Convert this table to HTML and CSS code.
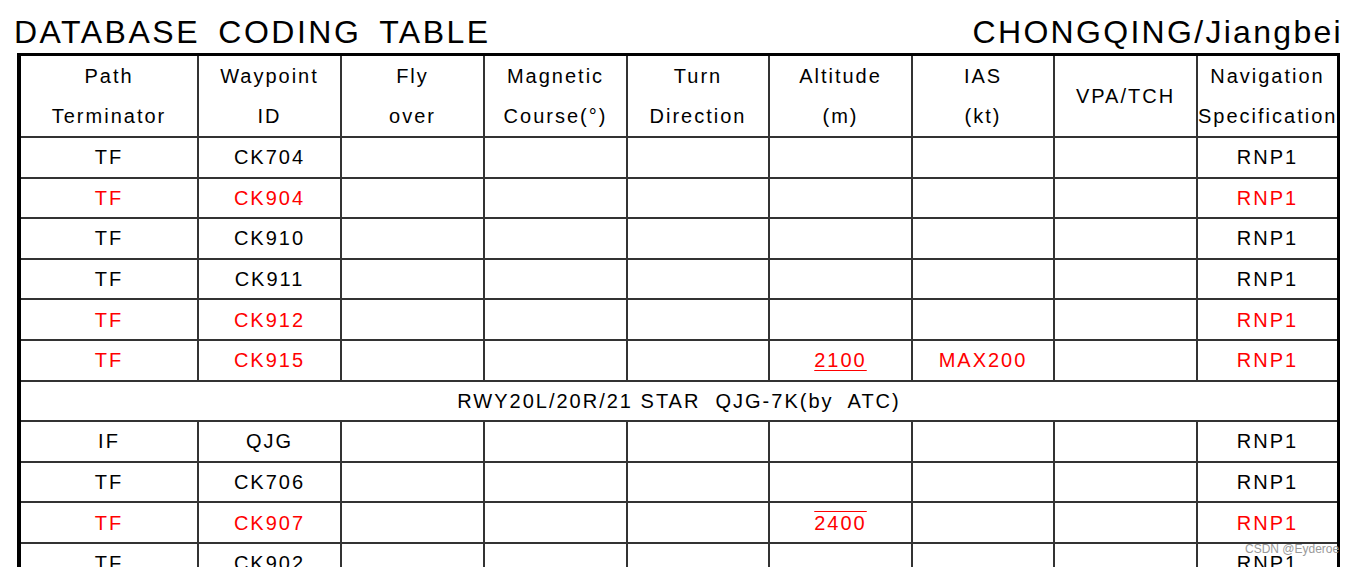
FILE: index.html
```html
<!DOCTYPE html>
<html>
<head>
<meta charset="utf-8">
<link rel="stylesheet" href="styles.css">
</head>
<body>
<div class="page">
  <div class="titlebar">
    <div class="title-left">DATABASE CODING TABLE</div>
    <div class="title-right">CHONGQING/Jiangbei</div>
  </div>
  <div class="frame">
    <table class="coding">
      <colgroup>
        <col class="c-first">
        <col class="c-mid"><col class="c-mid"><col class="c-mid"><col class="c-mid2">
        <col class="c-mid"><col class="c-mid2"><col class="c-mid"><col class="c-last">
      </colgroup>
      <thead>
        <tr class="head">
          <th>Path<br>Terminator</th>
          <th>Waypoint<br>ID</th>
          <th>Fly<br>over</th>
          <th>Magnetic<br>Course(°)</th>
          <th>Turn<br>Direction</th>
          <th>Altitude<br>(m)</th>
          <th>IAS<br>(kt)</th>
          <th>VPA/TCH</th>
          <th class="spec">Navigation<br>Specification</th>
        </tr>
      </thead>
      <tbody>
        <tr><td>TF</td><td>CK704</td><td></td><td></td><td></td><td></td><td></td><td></td><td>RNP1</td></tr>
        <tr class="red"><td>TF</td><td>CK904</td><td></td><td></td><td></td><td></td><td></td><td></td><td>RNP1</td></tr>
        <tr><td>TF</td><td>CK910</td><td></td><td></td><td></td><td></td><td></td><td></td><td>RNP1</td></tr>
        <tr><td>TF</td><td>CK911</td><td></td><td></td><td></td><td></td><td></td><td></td><td>RNP1</td></tr>
        <tr class="red"><td>TF</td><td>CK912</td><td></td><td></td><td></td><td></td><td></td><td></td><td>RNP1</td></tr>
        <tr class="red"><td>TF</td><td>CK915</td><td></td><td></td><td></td><td><span class="under">2100</span></td><td>MAX200</td><td></td><td>RNP1</td></tr>
        <tr class="section"><td colspan="9">RWY20L/20R/21 STAR  QJG-7K(by  ATC)</td></tr>
        <tr><td>IF</td><td>QJG</td><td></td><td></td><td></td><td></td><td></td><td></td><td>RNP1</td></tr>
        <tr><td>TF</td><td>CK706</td><td></td><td></td><td></td><td></td><td></td><td></td><td>RNP1</td></tr>
        <tr class="red"><td>TF</td><td>CK907</td><td></td><td></td><td></td><td><span class="over">2400</span></td><td></td><td></td><td>RNP1</td></tr>
        <tr><td>TF</td><td>CK902</td><td></td><td></td><td></td><td></td><td></td><td></td><td>RNP1</td></tr>
      </tbody>
    </table>
  </div>
  <div class="watermark">CSDN @Eyderoe</div>
</div>
</body>
</html>
```
FILE: styles.css
```css
html, body {
  margin: 0;
  padding: 0;
  background: #fff;
}
body {
  width: 1352px;
  height: 567px;
  overflow: hidden;
  font-family: "Liberation Sans", Arial, sans-serif;
  color: #000;
}
.page {
  position: relative;
  width: 1352px;
  height: 567px;
}
.titlebar {
  display: flex;
  justify-content: space-between;
  align-items: flex-start;
  height: 39px;
  padding: 14px 9px 0 14px;
  font-size: 32px;
  line-height: 36px;
}
.title-left {
  letter-spacing: 2.5px;
  word-spacing: 7px;
}
.title-right {
  letter-spacing: 2.3px;
}
.frame {
  margin-left: 17px;
  width: 1316px;
  border-left: 4px solid #000;
  border-right: 3px solid #000;
  border-top: 3px solid #000;
}
.coding {
  width: 1316px;
  table-layout: fixed;
  border-collapse: collapse;
  font-size: 20px;
  letter-spacing: 2px;
}
.c-first { width: 177px; }
.c-mid { width: 143px; }
.c-mid2 { width: 142px; }
.c-last { width: 140px; }
.coding th,
.coding td {
  padding: 0;
  text-align: center;
  vertical-align: middle;
  line-height: 36px;
  font-weight: normal;
  white-space: nowrap;
  overflow: hidden;
  border-right: 2px solid #333;
  border-bottom: 2px solid #333;
}
.coding th {
  line-height: 40px;
}
.coding th:last-child,
.coding td:last-child {
  border-right: none;
}
.coding .spec {
  overflow: visible;
}
.head { height: 80px; }
.coding tbody tr { height: 40.6px; }
.red td { color: #ff0000; }
.section td {
  white-space: pre;
}
.under {
  text-decoration: underline;
  text-decoration-thickness: 1px;
  text-underline-offset: 3px;
}
.over {
  text-decoration: overline;
  text-decoration-thickness: 1px;
}
.watermark {
  position: absolute;
  left: 1245px;
  top: 542px;
  font-size: 12px;
  line-height: 14px;
  color: #9a9a9a;
  font-family: "Liberation Sans", Arial, sans-serif;
}
```
